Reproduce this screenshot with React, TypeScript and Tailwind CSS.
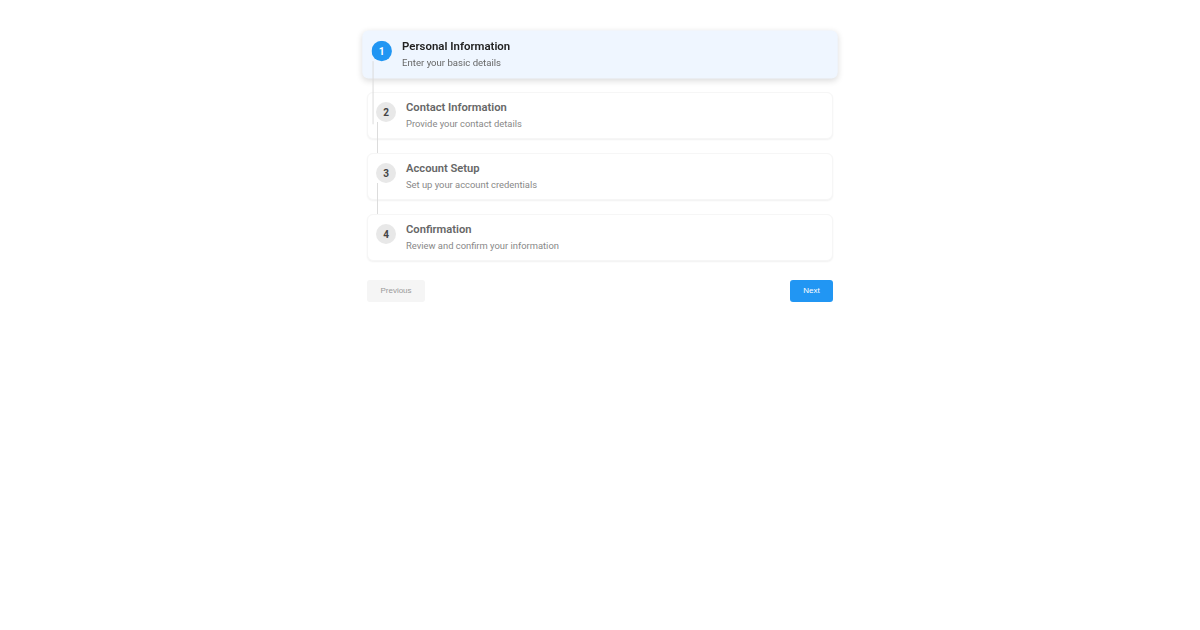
import React, { useState } from 'react';

interface Step {
  title: string;
  description: string;
}

const steps: Step[] = [
  { title: 'Personal Information', description: 'Enter your basic details' },
  { title: 'Contact Information', description: 'Provide your contact details' },
  { title: 'Account Setup', description: 'Set up your account credentials' },
  { title: 'Confirmation', description: 'Review and confirm your information' },
];

const StepCard: React.FC<{ step: Step; index: number; active: boolean; last: boolean }> = ({
  step,
  index,
  active,
  last,
}) => (
  <div
    className={`relative h-[47px] flex items-start gap-[10px] pl-[8px] pr-3 pt-[7px] rounded-md border
      ${active ? 'bg-[#eff6ff] border-[#eff6ff] shadow-[0_2px_6px_rgba(0,0,0,0.14)] scale-[1.02] z-10' : 'bg-white border-[#f6f6f6] shadow-[0_1px_2px_rgba(0,0,0,0.06)]'}
    `}
  >
    {!last && <div className="absolute left-[9px] top-[29px] w-px h-[62px] bg-[#dcdcdc]" />}
    <div
      className={`relative mt-[2px] w-5 h-5 shrink-0 rounded-full flex items-center justify-center text-[10px] font-bold
        ${active ? 'bg-[#2196f3] text-white' : 'bg-[#e8e8e8] text-[#444]'}
      `}
    >
      {index + 1}
    </div>
    <div className="flex flex-col">
      <h3 className={`text-[11.2px] leading-[16px] font-semibold ${active ? 'text-[#222]' : 'text-[#666]'}`}>
        {step.title}
      </h3>
      <p className={`mt-px text-[9.4px] leading-[14px] ${active ? 'text-[#666]' : 'text-[#888]'}`}>
        {step.description}
      </p>
    </div>
  </div>
);

export default function App() {
  const [current, setCurrent] = useState(0);

  return (
    <div className="min-h-screen bg-white" style={{ fontFamily: 'Roboto, "Liberation Sans", sans-serif' }}>
      <div className="w-[466px] mx-auto pt-[31px]">
        <div className="flex flex-col gap-[14px]">
          {steps.map((step, i) => (
            <StepCard key={step.title} step={step} index={i} active={i === current} last={i === steps.length - 1} />
          ))}
        </div>
        <div className="mt-[19px] flex justify-between">
          <button
            onClick={() => setCurrent(Math.max(0, current - 1))}
            className="w-[58px] h-[22px] rounded-[3px] bg-[#f5f5f5] text-[#9a9a9a] text-[8px] font-normal"
            style={{ fontFamily: '"Liberation Sans", Arial, sans-serif' }}
          >
            Previous
          </button>
          <button
            onClick={() => setCurrent(Math.min(steps.length - 1, current + 1))}
            className="w-[43px] h-[22px] rounded-[3px] bg-[#2196f3] text-white text-[8px] font-normal"
            style={{ fontFamily: '"Liberation Sans", Arial, sans-serif' }}
          >
            Next
          </button>
        </div>
      </div>
    </div>
  );
}
